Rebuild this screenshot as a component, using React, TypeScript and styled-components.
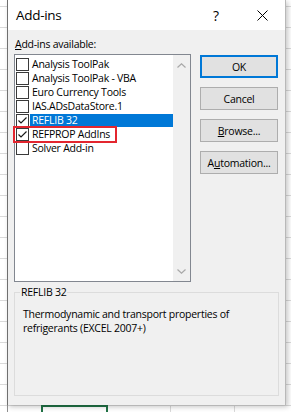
import React from "react";
import styled, { createGlobalStyle } from "styled-components";

const GlobalStyle = createGlobalStyle`
  html, body {
    margin: 0;
    padding: 0;
    background: #ffffff;
  }
  body {
    font-family: "Segoe UI", "Open Sans", "Noto Sans", sans-serif;
    font-size: 10.5px;
    letter-spacing: -0.25px;
    color: #000000;
  }
`;

const Sheet = styled.div`
  position: relative;
  width: 291px;
  height: 412px;
  overflow: hidden;
  background-color: #ffffff;
  background-image:
    linear-gradient(to right, transparent 7px, #8f8f8f 7px, #8f8f8f 8px, transparent 8px),
    repeating-linear-gradient(to bottom, transparent 0, transparent 6px, #dadada 6px, #dadada 7px, transparent 7px, transparent 21px),
    repeating-linear-gradient(to right, transparent 0, transparent 42px, #dadada 42px, #dadada 43px, transparent 43px, transparent 64px);
`;

const Dialog = styled.div`
  position: relative;
  box-sizing: border-box;
  margin-left: 7px;
  width: 279px;
  height: 405px;
  background: #f0f0f0;
  border-left: 1px solid #6f6f6f;
  border-right: 1px solid #b8b8b8;
  box-shadow: 2px 2px 5px rgba(0, 0, 0, 0.22);
  display: flex;
  flex-direction: column;
`;

const TitleBar = styled.div`
  height: 30px;
  flex: none;
  background: #ffffff;
  display: flex;
  align-items: center;
  padding-left: 8px;
`;

const Title = styled.div`
  flex: 1;
  font-size: 13.5px;
  letter-spacing: -0.3px;
  line-height: 18px;
`;

const TitleButton = styled.div<{ $w: number }>`
  width: ${(p) => p.$w}px;
  height: 30px;
  display: flex;
  align-items: center;
  justify-content: center;
  font-size: 14px;
`;

const Body = styled.div`
  flex: 1;
  display: flex;
  flex-direction: column;
  padding: 7px 6px 9px 6px;
`;

const Caption = styled.div`
  line-height: 14px;
  height: 14px;
  padding-left: 1px;
`;

const MainRow = styled.div`
  display: flex;
  gap: 9px;
  margin-top: 3px;
`;

const ListBox = styled.div`
  position: relative;
  box-sizing: border-box;
  width: 177px;
  height: 228px;
  border: 1px solid #828790;
  background: #ffffff;
  display: flex;
`;

const Items = styled.div`
  flex: 1;
  padding-top: 2px;
`;

const Item = styled.div`
  height: 14px;
  display: flex;
  align-items: center;
`;

const Check = styled.div`
  box-sizing: border-box;
  width: 13px;
  height: 13px;
  margin: 0 1px;
  border: 1px solid #3a3a3a;
  background: #ffffff;
  display: flex;
  align-items: center;
  justify-content: center;
`;

const ItemText = styled.div<{ $selected?: boolean }>`
  flex: 1;
  height: 13px;
  line-height: 13px;
  padding-left: 2px;
  white-space: nowrap;
  background: ${(p) => (p.$selected ? "#0078d7" : "transparent")};
  color: ${(p) => (p.$selected ? "#ffffff" : "#000000")};
`;

const ScrollBar = styled.div`
  width: 17px;
  background: #f0f0f0;
  display: flex;
  flex-direction: column;
  justify-content: space-between;
  align-items: center;
  padding: 8px 0 7px;
`;

const Highlight = styled.div`
  position: absolute;
  left: -2px;
  top: 71px;
  width: 104px;
  height: 17px;
  box-sizing: border-box;
  border: 2px solid #e3262f;
  pointer-events: none;
`;

const Buttons = styled.div`
  display: flex;
  flex-direction: column;
  gap: 9px;
  margin-top: 1px;
`;

const Button = styled.div<{ $default?: boolean }>`
  box-sizing: border-box;
  width: 78px;
  height: 23px;
  background: #e1e1e1;
  border: ${(p) => (p.$default ? "2px solid #0078d7" : "1px solid #adadad")};
  display: flex;
  align-items: center;
  justify-content: center;
`;

const Group = styled.fieldset`
  margin: 3px 0 0 0;
  padding: 0 8px;
  min-inline-size: 0;
  flex: 1;
  border: 1px solid #dcdcdc;
`;

const Legend = styled.legend`
  padding: 0 1px;
  margin-left: -3px;
  line-height: 14px;
`;

const Description = styled.div`
  margin-top: 8px;
  line-height: 14px;
`;

const SelectedCell = styled.div`
  box-sizing: border-box;
  margin-left: 41px;
  width: 67px;
  height: 10px;
  border: 2px solid #217346;
  border-bottom: none;
`;

const addins = [
  { name: "Analysis ToolPak", checked: false },
  { name: "Analysis ToolPak - VBA", checked: false },
  { name: "Euro Currency Tools", checked: false },
  { name: "IAS.ADsDataStore.1", checked: false },
  { name: "REFLIB 32", checked: true, selected: true },
  { name: "REFPROP AddIns", checked: true },
  { name: "Solver Add-in", checked: false },
];

function CheckMark() {
  return (
    <svg width="11" height="11" viewBox="0 0 11 11">
      <polyline points="1.5,5.5 4,8 9.5,2.5" fill="none" stroke="#1a1a1a" strokeWidth="1.2" />
    </svg>
  );
}

function Chevron({ up }: { up?: boolean }) {
  return (
    <svg width="9" height="5" viewBox="0 0 9 5">
      <polyline
        points={up ? "0.5,4.5 4.5,0.8 8.5,4.5" : "0.5,0.5 4.5,4.2 8.5,0.5"}
        fill="none"
        stroke="#a8a8a8"
        strokeWidth="1.2"
      />
    </svg>
  );
}

function CloseIcon() {
  return (
    <svg width="11" height="11" viewBox="0 0 11 11">
      <path d="M0.5 0.5 L10.5 10.5 M10.5 0.5 L0.5 10.5" stroke="#000" strokeWidth="1" />
    </svg>
  );
}

export default function App() {
  return (
    <>
      <GlobalStyle />
      <Sheet>
        <Dialog>
          <TitleBar>
            <Title>Add-ins</Title>
            <TitleButton $w={46}>?</TitleButton>
            <TitleButton $w={46}>
              <CloseIcon />
            </TitleButton>
          </TitleBar>
          <Body>
            <Caption>
              <u>A</u>dd-ins available:
            </Caption>
            <MainRow>
              <ListBox>
                <Items>
                  {addins.map((a) => (
                    <Item key={a.name}>
                      <Check>{a.checked && <CheckMark />}</Check>
                      <ItemText $selected={a.selected}>{a.name}</ItemText>
                    </Item>
                  ))}
                </Items>
                <ScrollBar>
                  <Chevron up />
                  <Chevron />
                </ScrollBar>
                <Highlight />
              </ListBox>
              <Buttons>
                <Button $default>OK</Button>
                <Button>Cancel</Button>
                <Button>
                  <span>
                    <u>B</u>rowse...
                  </span>
                </Button>
                <Button>
                  <span>
                    A<u>u</u>tomation...
                  </span>
                </Button>
              </Buttons>
            </MainRow>
            <Group>
              <Legend>REFLIB 32</Legend>
              <Description>
                Thermodynamic and transport properties of
                <br />
                refrigerants (EXCEL 2007+)
              </Description>
            </Group>
          </Body>
        </Dialog>
        <SelectedCell />
      </Sheet>
    </>
  );
}
